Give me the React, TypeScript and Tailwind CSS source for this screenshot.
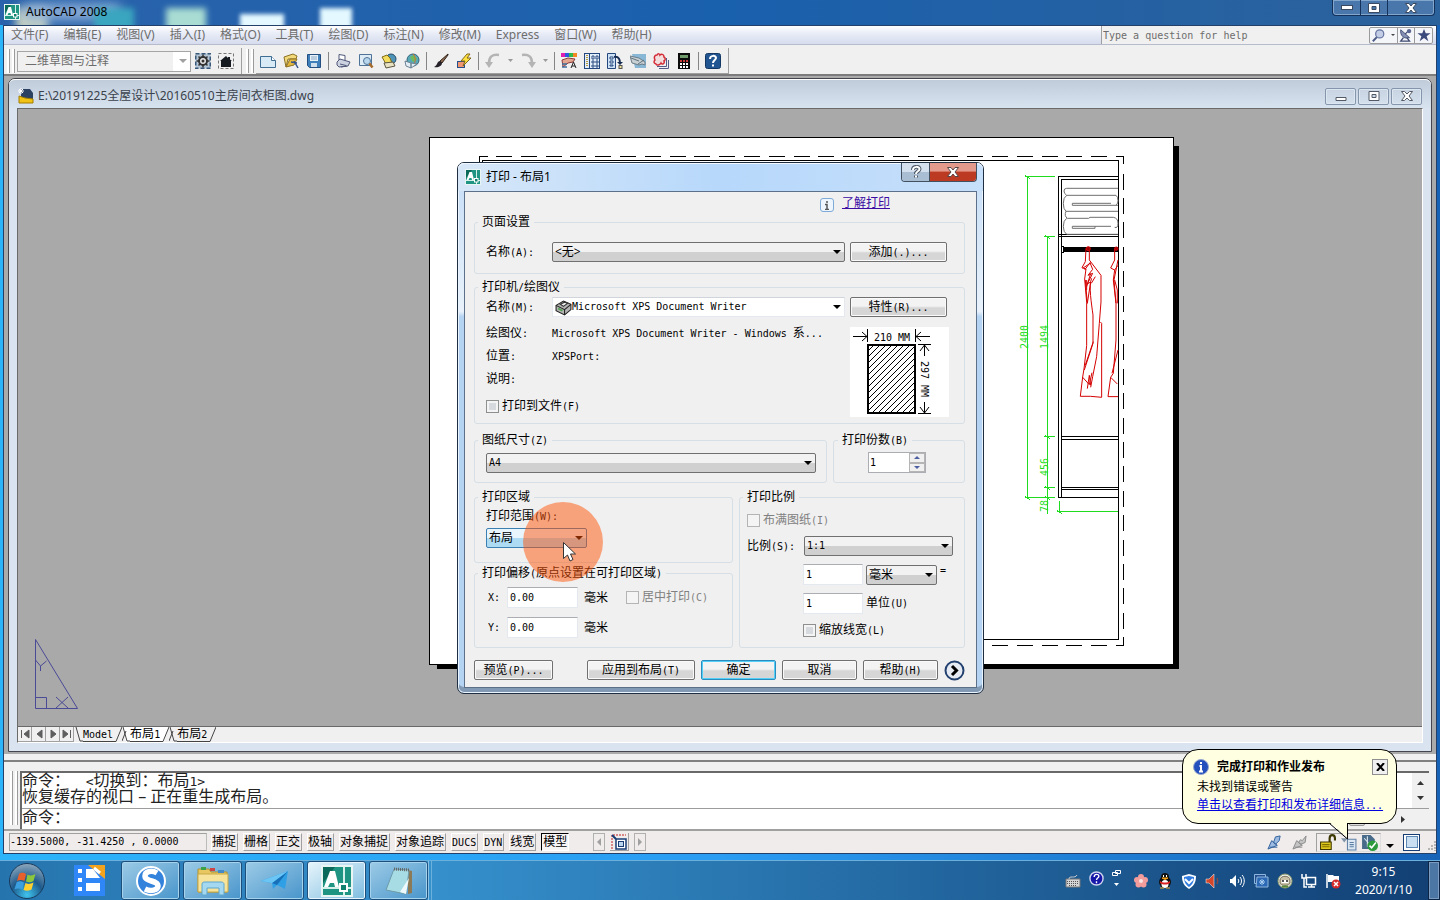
import type { ReactNode } from "react";

const sideTabs = ["捕捉", "栅格", "正交", "极轴", "对象捕捉", "对象追踪", "DUCS", "DYN", "线宽"];
const menus = [
  "文件(F)", "编辑(E)", "视图(V)", "插入(I)", "格式(O)", "工具(T)",
  "绘图(D)", "标注(N)", "修改(M)", "Express", "窗口(W)", "帮助(H)",
];

/* Latin runs are set in a half-width mono face, so two of them fill one hanzi cell */
function Mixed({ children, mono = "text-[10px]" }: { children: string; mono?: string }) {
  const parts = children.split(/([\x20-\x7e]+)/).filter(Boolean);
  return (
    <>
      {parts.map((part, i) => (
        <span
          key={i}
          className={
            /^[\x20-\x7e]/.test(part)
              ? `whitespace-pre font-['DejaVu_Sans_Mono',monospace] ${mono}`
              : "whitespace-pre"
          }
        >
          {part}
        </span>
      ))}
    </>
  );
}

function Icon({ children, size = 16 }: { children: ReactNode; size?: number }) {
  return (
    <svg width={size} height={size} viewBox="0 0 16 16" className="shrink-0" aria-hidden="true">
      {children}
    </svg>
  );
}

function CadLogo({ size = 16 }: { size?: number }) {
  return (
    <Icon size={size}>
      <rect width="16" height="16" fill="#e8f5f2" />
      <rect x="1" y="1" width="14" height="14" fill="#1f9483" />
      <path d="M1 1h6L1 9z" fill="#0c6a5c" />
      <path d="M1.500 11L4.500 3h2.500l2 8H7l-.5-2H4.500L3.500 11z" fill="#fff" />
      <path d="M11.500 1v8M11.500 13V15M1 11.500h8M13 11.500h2" stroke="#d5f0ea" />
      <rect x="9.500" y="9.500" width="3.500" height="3.500" fill="#12806f" stroke="#fff" />
    </Icon>
  );
}

function Caret({ className = "text-black" }: { className?: string }) {
  return (
    <svg width="8" height="4" viewBox="0 0 8 4" className={`pointer-events-none shrink-0 ${className}`} aria-hidden="true">
      <path d="M0 0h8L4 4z" fill="currentColor" />
    </svg>
  );
}

function Dropdown({ id, value, mono, className, look }: { id: string; value: string; mono?: boolean; className: string; look?: string }) {
  return (
    <div className={`relative flex h-5 items-center ${className}`}>
      <select
        id={id}
        className={`h-5 w-full appearance-none rounded-[2px] border pr-4 pl-0.5 text-black outline-none ${
          mono ? "font-['DejaVu_Sans_Mono',monospace] text-[10px]" : "text-xs"
        } ${look ?? "border-[#707070] bg-linear-to-b from-[#f2f2f2] from-50% to-[#d0d0d0] to-50%"}`}
      >
        <option>{value}</option>
      </select>
      <Caret className="absolute right-1 text-black" />
    </div>
  );
}

function PushButton({ children, className, primary }: { children: string; className: string; primary?: boolean }) {
  return (
    <button
      className={`h-5 rounded-[2px] border bg-linear-to-b from-[#f3f3f3] from-45% to-[#d6d6d6] to-55% text-center leading-4 whitespace-nowrap ${
        primary ? "border-[#2a8dbd] shadow-[inset_0_0_0_1px_#54d0f8]" : "border-[#707070] shadow-[inset_0_0_0_1px_#fafafa]"
      } ${className}`}
    >
      <Mixed>{children}</Mixed>
    </button>
  );
}

function Tick({ id, label, disabled }: { id: string; label: string; disabled?: boolean }) {
  return (
    <div className="flex h-4 items-center gap-[3px]">
      <input
        id={id}
        type="checkbox"
        disabled={disabled}
        className={`size-[13px] shrink-0 appearance-none border shadow-[inset_0_0_0_2px_#f4f4f4] ${
          disabled ? "border-[#b4b4b4] bg-[#f4f4f4]" : "border-[#8e8f8f] bg-[#d6dadf]"
        }`}
      />
      <label htmlFor={id} className={disabled ? "text-[#808080]" : ""}>
        <Mixed>{label}</Mixed>
      </label>
    </div>
  );
}

function Group({ title, className, children }: { title: string; className: string; children: ReactNode }) {
  return (
    <fieldset className={`min-w-0 rounded-[3px] border border-[#d5dfe5] ${className}`}>
      <legend className="-ml-2 h-4 px-1 leading-4">
        <Mixed>{title}</Mixed>
      </legend>
      {children}
    </fieldset>
  );
}

const field =
  "h-[21px] border border-[#e3e9ef] border-t-[#abadb3] bg-white pl-0.5 font-['DejaVu_Sans_Mono',monospace] text-[10px] text-black outline-none";

function ToolButton({ label, children }: { label: string; children: ReactNode }) {
  return (
    <button aria-label={label} className="flex h-6 w-[23px] shrink-0 items-center justify-center">
      <Icon>{children}</Icon>
    </button>
  );
}

function Sep() {
  return (
    <div className="flex w-1.5 shrink-0 justify-center">
      <div className="h-[18px] w-px bg-[#868686]" />
    </div>
  );
}

function Grip({ className }: { className: string }) {
  return (
    <div className={`flex shrink-0 gap-0.5 ${className}`}>
      <div className="w-[3px] border-r border-[#9b9b9b] bg-white" />
      <div className="w-[3px] border-r border-[#9b9b9b] bg-white" />
    </div>
  );
}

function TitleBar() {
  return (
    <header className="relative flex h-[25px] shrink-0 items-center justify-between overflow-hidden bg-linear-to-r from-[#2a63ab] via-[#1960ad] via-50% to-[#2c629b]">
      <div className="absolute top-2 left-4 h-6 w-8 bg-[#c8d3c0] blur-[4px]" />
      <div className="absolute top-1 left-[24px] h-4 w-24 bg-[#8fb0d8] blur-[6px]" />
      <div className="absolute top-2 left-[94px] h-6 w-10 bg-[#3aa6bf] blur-[3px]" />
      <div className="absolute top-2 left-[166px] h-6 w-10 bg-[#a9dcd2] blur-[3px]" />
      <div className="absolute top-3.5 left-[240px] h-5 w-11 bg-[#e3f8ff] blur-[2px]" />
      <div className="absolute top-2 left-[320px] h-6 w-8 bg-[#e3f8ff] blur-[2px]" />
      <div className="relative flex items-center gap-1.5 pb-0.5 pl-1">
        <CadLogo />
        <h1 className="text-xs text-black">AutoCAD 2008</h1>
      </div>
      <div className="relative mr-[5px] flex h-4 self-start rounded-b border border-t-0 border-[#14315c] bg-[#4a77ab] shadow-[inset_0_0_0_1px_#83a6cd]">
        <button aria-label="最小化" className="flex w-7 items-center justify-center border-r border-[#14315c]">
          <svg width="12" height="5"><rect x=".5" y=".5" width="11" height="4" fill="#fff" stroke="#3b4a60" /></svg>
        </button>
        <button aria-label="最大化" className="flex w-[27px] items-center justify-center border-r border-[#14315c]">
          <svg width="12" height="10"><path d="M.5.5h11v9H.5zM4 3.500h4v3H4z" fill="#fff" fillRule="evenodd" stroke="#3b4a60" /></svg>
        </button>
        <button aria-label="关闭" className="flex w-[46px] items-center justify-center">
          <svg width="12" height="10" viewBox="0 0 12 10"><path d="M.5.500h3.500l2 2.500 2-2.500h3.500L8 5l3.500 4.500H8L6 7 4 9.500H.500L4 5z" fill="#fff" stroke="#3b4a60" /></svg>
        </button>
      </div>
    </header>
  );
}

function MenuBar() {
  return (
    <nav className="flex h-[19px] shrink-0 items-center border-b border-[#b6bccc] bg-linear-to-b from-white via-[#e9edf7] via-40% to-[#d6dcee] pl-[7px]">
      <div className="flex flex-1 gap-[15px] text-xs leading-5 whitespace-nowrap text-[#6d6d6d]">
        {menus.map((m) => (
          <button key={m}>{m}</button>
        ))}
      </div>
      <input
        aria-label="Type a question for help"
        placeholder="Type a question for help"
        className="h-[18px] w-[268px] border-l border-[#a0a0a0] bg-[#f0f0f0] pl-px font-['DejaVu_Sans_Mono',monospace] text-[10px] outline-none placeholder:text-[#6d6d6d]"
      />
      <div className="mr-[3px] flex h-[17px] items-center rounded-[2px] border border-[#9a9a9a] bg-[#f4f5f9]">
        <button aria-label="搜索" className="flex h-full w-7 items-center justify-between border-r border-[#9a9a9a] px-0.5">
          <Icon size={13}>
            <path d="M1 15l5-5" stroke="#4c5a86" strokeWidth="2.500" />
            <circle cx="9.500" cy="6" r="5" fill="#c4cde6" stroke="#6573a0" strokeWidth="1.500" />
          </Icon>
          <svg width="4" height="2"><path d="M0 0h4L2 2z" fill="#444" /></svg>
        </button>
        <button aria-label="通讯中心" className="flex h-full w-[17px] items-center justify-center border-r border-[#9a9a9a]">
          <Icon size={14}>
            <path d="M2 2c-1 7 4 11 10 9z" fill="#8490b4" stroke="#3e4a70" />
            <path d="M7 7l4-4M5 11l-3 4h10l-3-4" stroke="#3e4a70" strokeWidth="1.500" fill="none" />
            <circle cx="11.500" cy="3.500" r="2.500" fill="#5b6892" />
          </Icon>
        </button>
        <button aria-label="收藏夹" className="flex h-full w-[17px] items-center justify-center">
          <Icon size={14}>
            <path d="M8 1l2 5h5.500l-4.500 3.500L13 15l-5-3.500L3 15l2-5.500L.500 6H6z" fill="#3b4a7c" />
          </Icon>
        </button>
      </div>
    </nav>
  );
}

function ToolBar() {
  return (
    <div className="flex h-[29px] shrink-0 items-center bg-[#f0f0f0] pt-[3px]">
      <Grip className="ml-[3px] h-6" />
      <div className="relative ml-0.5 flex h-[21px] w-[174px] shrink-0 items-center border border-[#a5a5a5] bg-white">
        <select aria-label="工作空间" disabled className="h-full w-full appearance-none bg-linear-to-r from-[#f0f0f0] from-90% to-white to-90% pl-[7px] text-xs text-[#6d6d6d]">
          <option>二维草图与注释</option>
        </select>
        <Caret className="absolute right-[3px] text-[#a0a0a0]" />
      </div>
      <ToolButton label="工作空间设置">
        <rect x=".5" y=".5" width="15" height="15" fill="#b5c6d6" stroke="#39597a" strokeWidth="2" strokeDasharray="4 2" />
        <circle cx="8" cy="8" r="4" fill="#e6e6e6" stroke="#333" strokeWidth="2" />
        <path d="M8 1.500v3M8 11.500v3M1.500 8h3M11.500 8h3M3.500 3.500l2 2M10.500 10.500l2 2M12.500 3.500l-2 2M5.500 10.500l-2 2" stroke="#333" strokeWidth="1.500" />
        <circle cx="8" cy="8" r="1.500" fill="#333" />
      </ToolButton>
      <ToolButton label="我的工作空间">
        <rect x=".5" y=".5" width="15" height="15" fill="none" stroke="#777" strokeDasharray="3 2" />
        <path d="M8 3L2 8h1v6h10V8h1l-2-1.500V4h-2v1z" fill="#171b22" />
      </ToolButton>
      <div className="ml-1 h-[27px] w-px shrink-0 bg-[#a0a0a0]" />
      <Grip className="mr-0.5 ml-1 h-6" />
      <div className="flex h-full items-center border-r border-b border-[#a0a0a0] pr-1">
        <ToolButton label="新建">
          <path d="M.500 3.500h11l4 4v7H.500z" fill="#d7eaf5" stroke="#3f6d93" />
          <path d="M11.500 3.500v4h4" fill="#fff" stroke="#3f6d93" />
        </ToolButton>
        <ToolButton label="打开">
          <path d="M1 4l9-3 4 2-1 3H5L3 14z" fill="#f2d97a" stroke="#8c7226" />
          <path d="M3 14l4-8h7l-3 6z" fill="#e4b93e" stroke="#8c7226" />
          <path d="M8 9l6 1M11 8l4 7" stroke="#35528c" strokeWidth="1.500" />
        </ToolButton>
        <ToolButton label="保存">
          <path d="M1.500 1.500h13v13h-11l-2-2z" fill="#3f7fba" stroke="#244f80" />
          <rect x="4" y="2" width="8" height="6" fill="#e8f1f8" />
          <path d="M5 4h6M5 6h6" stroke="#8aa9c4" />
          <rect x="5" y="10" width="6" height="4" fill="#cfdfec" />
        </ToolButton>
        <Sep />
        <ToolButton label="打印">
          <path d="M4 8V1.500l6 1V8" fill="#fff" stroke="#50597a" />
          <path d="M2 9l3-3 10 3-2 4-9 1-2-2z" fill="#ccd2e0" stroke="#50597a" />
          <path d="M5 11l6 1.500M6 14l6-1" stroke="#50597a" />
        </ToolButton>
        <ToolButton label="打印预览">
          <path d="M1.500 1.500h12v11h-12z" fill="#dcebf6" stroke="#4f7396" />
          <circle cx="9" cy="8" r="3.500" fill="#b5d6ec" stroke="#4f7396" />
          <path d="M11.500 10.500l3 4" stroke="#a66a2c" strokeWidth="2.500" />
        </ToolButton>
        <ToolButton label="发布">
          <circle cx="10" cy="6" r="5" fill="#4f93b8" stroke="#254d6b" />
          <path d="M1 4l5-2 3 3 2 5-6 1z" fill="#f4dc5c" stroke="#7f6b16" />
          <path d="M3 10l9-1 2 4-9 2z" fill="#e9e1c4" stroke="#59553f" />
        </ToolButton>
        <ToolButton label="三维 DWF">
          <circle cx="9" cy="7" r="6" fill="#58a9b6" stroke="#33647d" />
          <path d="M6 4l4-2 3 4-4 3z" fill="#6dbb5c" /><path d="M9 1c3 3 3 8 0 12" stroke="#d1702f" fill="none" />
          <path d="M1 8l6 2v5l-5-2zM7 10l6 1-6 4z" fill="#e4edf3" stroke="#6c8496" />
        </ToolButton>
        <Sep />
        <ToolButton label="特性匹配">
          <path d="M15 1L7 8l2 2 6-8z" fill="#8d6a50" stroke="#33241b" />
          <path d="M7 8c-3 0-2 4-6 6 4 1 8-1 8-4z" fill="#27222a" />
        </ToolButton>
        <ToolButton label="块编辑器">
          <rect x="1.500" y="8.500" width="7" height="6" fill="#f19673" stroke="#274f8a" />
          <path d="M11 1L5 8h4l-2 5 8-8h-4l3-4z" fill="#ffe23f" stroke="#82671a" />
        </ToolButton>
        <Sep />
        <ToolButton label="放弃">
          <path d="M14 2C7 1 4 4 4 10" fill="none" stroke="#b4b4b4" strokeWidth="2.500" />
          <path d="M0 9h8l-4 6z" fill="#b4b4b4" />
        </ToolButton>
        <div className="flex w-3 justify-center"><svg width="5" height="3"><path d="M0 0h5L2.500 3z" fill="#999" /></svg></div>
        <ToolButton label="重做">
          <path d="M2 2c7-1 10 2 10 8" fill="none" stroke="#b4b4b4" strokeWidth="2.500" />
          <path d="M8 9h8l-4 6z" fill="#b4b4b4" />
        </ToolButton>
        <div className="flex w-3 justify-center"><svg width="5" height="3"><path d="M0 0h5L2.500 3z" fill="#999" /></svg></div>
        <Sep />
        <ToolButton label="特性">
          <path d="M0 0h4v4H0z" fill="#e01fb0" /><path d="M4 0h4v4H4z" fill="#2c55e0" />
          <path d="M8 0h4v4H8z" fill="#2fb94a" /><path d="M12 0h4v4h-4z" fill="#f08a20" />
          <path d="M1 7l6-2 7 1-2 3-5 1-5 4z" fill="#e3a58f" stroke="#8a3b3b" />
          <path d="M1 11h5M1 14h5" stroke="#3f6da0" strokeWidth="1.500" />
          <path d="M10 15l2.500-6 2.500 6M11 13h3" fill="none" stroke="#222" />
        </ToolButton>
        <ToolButton label="设计中心">
          <rect x=".5" y=".5" width="15" height="15" fill="#e4eefa" stroke="#24487e" />
          <path d="M5.500 1v14" stroke="#24487e" /><path d="M3 2v12" stroke="#b69c3a" strokeDasharray="1 1" strokeWidth="2" />
          <path d="M8 3h2v3H8zM12 3h2v3h-2zM8 8h2v2H8zM12 8h2v2h-2zM8 12h2v2H8zM12 12h2v2h-2z" fill="#fff" stroke="#24487e" />
        </ToolButton>
        <ToolButton label="工具选项板">
          <path d="M.500.500h8v15h-8z" fill="#cfe2f5" stroke="#24487e" />
          <path d="M3 4h3v2H3zM3 8h3v2H3zM3 12h3v1H3z" fill="#fff" stroke="#24487e" />
          <path d="M7 4c5-1 6 3 6 6" fill="none" stroke="#182c52" strokeWidth="2" />
          <path d="M10 9h6l-3 3z" fill="#182c52" /><rect x="12" y="12.500" width="3" height="3" fill="#f2e394" stroke="#555" />
        </ToolButton>
        <ToolButton label="图纸集管理器">
          <path d="M2 1h14v14H5z" fill="#88b8d6" /><path d="M0 3l9 2 6 4v3l-3-1-3 1-7-2z" fill="#c9d0d4" stroke="#6b7d88" />
          <path d="M1 5l8 3M8 11l6-4" stroke="#5f747f" />
        </ToolButton>
        <ToolButton label="标记集管理器">
          <path d="M4 13.500h9.500V5M6 15.500h9.500V7" fill="none" stroke="#555a86" />
          <path d="M2 11V2h9v9z" fill="#f3dede" />
          <path d="M3 11c-3-1-2-3-1-4-1-2-1-5 2-5 1-2 3-1 3 0 2-2 4 0 4 2 2 1 1 4 0 4 1 3-2 4-3 2-1 2-4 3-5 1z" fill="none" stroke="#d42a35" strokeWidth="1.500" />
        </ToolButton>
        <ToolButton label="快速计算器">
          <rect x="2" width="12" height="16" fill="#0b0b0b" /><rect x="4" y="2" width="8" height="3" fill="#6f9a6a" />
          <path d="M4 8h8M4 11h8M4 14h8" stroke="#fff" strokeWidth="2" strokeDasharray="2 1" />
          <path d="M4 8h8" stroke="#c93a3a" strokeWidth="2" strokeDasharray="2 1" />
        </ToolButton>
        <Sep />
        <ToolButton label="帮助">
          <rect x=".5" y=".5" width="15" height="15" rx="2" fill="#205591" stroke="#143863" />
          <path d="M5 6c0-4 6-4 6-1 0 2-3 2-3 5M8 11.500v2" fill="none" stroke="#fff" strokeWidth="2" />
        </ToolButton>
      </div>
    </div>
  );
}

function PaperSpace() {
  return (
    <svg width="1404" height="617" viewBox="18 109 1404 617" className="block" shapeRendering="crispEdges" fill="none">
      <rect x="437" y="146" width="742" height="523" fill="#000" />
      <rect x="429.500" y="137.500" width="744" height="527" fill="#fff" stroke="#000" />
      <path d="M479.500 164v-7.500h8M1116 156.500h7.500v7" stroke="#000" />
      <path d="M496 156.500h620M992 645.500h132" stroke="#000" strokeDasharray="16 8.800" />
      <path d="M1123.500 173.600V645" stroke="#000" strokeDasharray="16 8.400" />
      <path d="M482.500 160.500h636v479h-636z" stroke="#000" />

      {/* wardrobe */}
      <path
        d="M1118 176.500h-59.500v321h59.500M1118 179.500h-56.500v318M1058.500 234.500h60M1058.500 236.500h60M1061.500 436.500h57M1061.500 439.500h57M1061.500 487.500h57M1061.500 489.500h57"
        stroke="#000"
      />
      <path d="M1062 247h56v5h-56z" fill="#000" />
      <path d="M1061.500 246.500h2v6h-2z" fill="#fff" stroke="#000" />

      {/* folded blankets */}
      <g transform="translate(990 120) scale(0.3333)" stroke="#6e6e6e" strokeWidth="3" shapeRendering="auto">
        <path d="M384 205H230q-8 0-8 8t8 13h148q6 4 6 16t-6 12M230 226q-10 6-10 24t8 24h156M228 274q-6 14 4 21h64l4-3h70q14 2 14 18t-10 12M230 295q-10 6-10 24t10 24h154" />
        <path d="M384 256H247v-6h116M363 319h-48v6h-68v-6h68" />
      </g>

      {/* clothes on the rail */}
      <g transform="translate(990 120) scale(0.3333)" stroke="#d40000" strokeWidth="3" shapeRendering="auto">
        <path d="M288 385l-2 40-10 18 12 4-4 30 6 70v130l-8 70-4 24-7 58 30 0 34 3V610l-4-4M298 385v35l35 46v80l-5 64-8 100-12 60-6 32" />
        <path d="M284 450l16-22 8 20-14 18 14-6-16 32 10-6-10 64M286 480l6 70M290 500l12-40M305 475c-10 20 0 80 4 110v85l-26 80M316 470l-12 20M310 665l-24 70M278 772l20 22 8-36M292 806l6-40 4 30M290 480v30M278 445l24-16" />
        <path d="M374 385v35l-12 24 12 6-4 30 8 70v110l-8 100-8 12-8 58h30M384 420l-12 60 6 70M374 450l10-14M384 690l-18 70M362 772l20 20M374 480l8 30v40" />
        <circle cx="295" cy="386" r="6" fill="#900" />
        <circle cx="379" cy="386" r="5" fill="#900" />
      </g>

      {/* dimensions */}
      <g stroke="#1fdc1f">
        <path d="M1055 176.500h-30M1027.500 176v322M1025 497.500h30M1047.500 236v278M1044 236.500h11M1044 436.500h11M1044 487.500h11M1059.500 501v12M1057 511.500h61" />
        <path d="M1025 175l5 4M1025 496l5 4M1045 235l5 4M1045 435l5 4M1045 486l5 4M1045 496l5 4M1057 510l5 4" />
      </g>
      <g fill="#1fdc1f" fontFamily="DejaVu Sans Mono, monospace" fontSize="10" textAnchor="middle">
        <text transform="translate(1028 337) rotate(-90)">2400</text>
        <text transform="translate(1048 337) rotate(-90)">1494</text>
        <text transform="translate(1048 467) rotate(-90)">456</text>
        <text transform="translate(1048 506) rotate(-90)">78</text>
      </g>

      {/* UCS triangle */}
      <path
        d="M35.500 639.500v69h42zM35.500 697.500h11v11M35.500 660l5 6 6-5M40.500 666v5M56 697l12 11M68 697l-12 11"
        stroke="#4a4a96"
        shapeRendering="auto"
      />
    </svg>
  );
}

function DocumentWindow() {
  return (
    <main className="flex min-h-0 flex-1 flex-col border-t-2 border-[#7c7c7c] bg-[#ababab] px-1 pt-0.5 pb-0.5">
      <div className="flex min-h-0 flex-1 flex-col rounded-t-[7px] border border-[#45454d] bg-[#d9e4f0] px-2 pb-2">
        <div className="-mx-2 flex h-[29px] shrink-0 items-center justify-between rounded-t-md border-t border-white bg-linear-to-b from-[#c0ccda] to-[#d8e3f0] px-2">
          <div className="flex items-center gap-1 pt-1 pl-px">
            <Icon>
              <path d="M3 1h9l3 4v9H3z" fill="#2c4263" />
              <path d="M3 0v6M0 3h6M1 1l4 4M5 1L1 5" stroke="#fff" />
              <path d="M1 8l6 2 8 1v4H1z" fill="#f2c317" stroke="#a37e00" />
            </Icon>
            <h2 className="text-xs text-[#3a424c]">E:\20191225全屋设计\20160510主房间衣柜图.dwg</h2>
          </div>
          <div className="flex gap-0.5 pt-1 pr-px">
            {["M2 9.500h10v3H2z", "M2 3.500h10v9H2zM5 6.500h4v3H5z", "M1.500 3.500h3L7 6l2.500-2.500h3L9 8l3.500 4.500h-3L7 10l-2.500 2.500h-3L5 8z"].map((d, i) => (
              <button
                key={d}
                aria-label={["最小化文档", "还原文档", "关闭文档"][i]}
                className="flex h-[17px] w-[31px] items-center justify-center rounded-[2px] border border-[#8595ab] shadow-[inset_0_0_0_1px_#dce6f1]"
              >
                <svg width="14" height="16"><path d={d} fill="#fff" fillRule="evenodd" stroke="#535a66" /></svg>
              </button>
            ))}
          </div>
        </div>
        <div className="flex min-h-0 flex-1 flex-col border border-[#6a6a6a] border-r-white border-b-white bg-[#a9a9a9]">
          <div className="min-h-0 flex-1 overflow-hidden">
            <PaperSpace />
          </div>
          <div className="flex h-4 shrink-0 border-t border-[#696969] bg-[#f0f0f0] text-xs leading-[15px]">
            {["M1.500 3v8M9 3L4 7l5 4z", "M8 3L3 7l5 4z", "M3 3l5 4-5 4z", "M8.500 3v8M1 3l5 4-5 4z"].map((d) => (
              <button key={d} aria-label="滚动布局选项卡" className="flex w-3.5 items-center justify-center border-r border-b border-[#a0a0a0]">
                <svg width="10" height="14"><path d={d} fill="#5e5e5e" stroke="#5e5e5e" /></svg>
              </button>
            ))}
            <div className="flex pl-px" role="tablist">
              {["Model", "布局1", "布局2"].map((name, i) => (
                <div key={name} className="flex">
                  <svg width="8" height="15">
                    <path d={i === 1 ? "M0 0h8v15H4z" : "M0 0"} fill="#fff" />
                    <path d="M1 0l4 14h3" fill="none" stroke="#444" />
                    {i > 0 && <path d="M0 14L4 4" stroke="#444" />}
                  </svg>
                  <button role="tab" className={`border-b border-[#444] leading-[14px] ${i === 1 ? "bg-white" : ""}`}>
                    <Mixed>{name}</Mixed>
                  </button>
                  <svg width="9" height="15">
                    <path d={i === 1 ? "M0 0h9L4 15H0z" : "M0 0"} fill="#fff" />
                    <path d="M0 14.500h3L9 0" fill="none" stroke="#444" />
                  </svg>
                </div>
              ))}
            </div>
          </div>
        </div>
      </div>
    </main>
  );
}

function CommandPane() {
  return (
    <section className="mt-1.5 flex shrink-0 gap-0.5 border-t-2 border-[#808080] bg-[#f0f0f0] pt-[9px] pr-[7px] pl-1.5">
      <Grip className="h-[54px]" />
      <div className="min-w-0 flex-1 border-t-2 border-l-2 border-[#696969] bg-white text-base text-[#222]">
        <div className="flex h-9 border-b border-[#9c9c9c]">
          <div className="flex-1 leading-4 whitespace-pre">
            <p className="-mt-px h-4">命令：<Mixed mono="text-[13px]">{"  <"}</Mixed>切换到：布局<Mixed mono="text-[13px]">{"1>"}</Mixed></p>
            <p className="h-4">恢复缓存的视口 – 正在重生成布局。</p>
          </div>
          <div className="flex w-[17px] flex-col items-center justify-between bg-[#f0f0f0] py-2">
            <svg width="7" height="4"><path d="M0 4h7L3.500 0z" fill="#333" /></svg>
            <svg width="7" height="4"><path d="M0 0h7L3.500 4z" fill="#333" /></svg>
          </div>
        </div>
        <div className="flex h-5 items-center">
          <label htmlFor="command" className="-mt-1 leading-4">命令：</label>
          <input id="command" className="h-4 min-w-0 flex-1 outline-none" />
          <div className="flex h-full w-16 items-center justify-between bg-[#f0f0f0] px-1">
            <div className="h-3.5 w-4 rounded-[2px] border border-[#999] bg-[#dcdcdc]" />
            <svg width="4" height="7"><path d="M0 0v7l4-3.500z" fill="#333" /></svg>
          </div>
          <div className="h-full w-5 bg-[#f0f0f0]" />
        </div>
      </div>
    </section>
  );
}

function StatusBar() {
  return (
    <footer className="flex h-6 shrink-0 items-center border-t-2 border-[#a0a0a0] bg-[#f0ecec] text-xs leading-4">
      <output className="ml-[5px] flex h-[18px] w-[198px] shrink-0 items-center border border-[#a0a0a0] border-r-[#bbb]">
        <Mixed>-139.5000, -31.4250 , 0.0000</Mixed>
      </output>
      <div className="ml-1 flex gap-[5px] whitespace-nowrap">
        {sideTabs.map((t) => (
          <button key={t} className="h-[18px] border-t border-r border-b border-l border-[#a0a0a0] border-t-white border-l-white pr-px">
            <Mixed>{t}</Mixed>
          </button>
        ))}
        <button className="h-[18px] border-t border-r border-b border-l border-white border-t-black border-l-black bg-[#f7f4f4] px-px">模型</button>
      </div>
      <div className="ml-6 flex items-center gap-[5px]">
        <button aria-label="上一布局" className="flex h-[18px] w-3 items-center justify-center border border-[#b0b0b0]">
          <svg width="4" height="8"><path d="M4 0v8L0 4z" fill="#a0a0a0" /></svg>
        </button>
        <button aria-label="最大化视口" className="flex h-[18px] w-[19px] items-center justify-center border-r border-b border-[#a0a0a0]">
          <Icon>
            <path d="M1 15V1h14" fill="none" stroke="#c02020" strokeDasharray="2 1" />
            <path d="M1 1l4 4" stroke="#173c74" strokeWidth="2" />
            <rect x="5" y="5" width="10" height="10" fill="#fff" stroke="#173c74" strokeWidth="1.500" />
            <rect x="7.500" y="7.500" width="5" height="5" fill="#bcd4ec" stroke="#173c74" />
          </Icon>
        </button>
        <button aria-label="下一布局" className="flex h-[18px] w-3 items-center justify-center border border-[#b0b0b0]">
          <svg width="4" height="8"><path d="M0 0v8l4-4z" fill="#a0a0a0" /></svg>
        </button>
      </div>
      <div className="ml-auto flex items-center">
        <div className="flex gap-2.5 pr-[9px]">
          <Icon size={15}>
            <path d="M1 15L5 6l6 5zM3 13h8M7 8l2-6 5-1-1 5-4 4z" fill="#9dbbe0" stroke="#2e5f9c" />
          </Icon>
          <Icon size={15}>
            <path d="M1 15L5 6l6 5zM3 13h8M7 8l2-3 2 1 4-5-1 7-5 2z" fill="#c4c4c4" stroke="#8a8a8a" />
          </Icon>
        </div>
        <div className="flex h-[19px] items-center gap-1 border border-[#a0a0a0] border-r-[#ddd] border-b-[#ddd] pr-0.5 pl-0.5">
          <Icon size={17}>
            <path d="M10 8V4c0-4 5-4 5 0v2" fill="none" stroke="#3c3600" strokeWidth="2" />
            <path d="M1.500 7.500h10v7h-10z" fill="#e0c81e" stroke="#3c3600" />
            <path d="M3 10h7M3 12h7" stroke="#7d6f00" />
          </Icon>
          <Icon size={17}>
            <path d="M7 5h8v10H7z" fill="#dbe8f4" stroke="#5e7fa4" /><path d="M9 8h4M9 10h4M9 12h4" stroke="#5e7fa4" />
            <path d="M1 4h6l-3 4z" fill="#7f93a8" />
          </Icon>
          <Icon size={17}>
            <path d="M1 1h8l4 4v9H1z" fill="#496b8a" /><path d="M3 4l7 8M6 2v10" stroke="#dfeaf3" />
            <circle cx="11" cy="11" r="5" fill="#2d9a3c" /><path d="M8 11l2 2 4-5" fill="none" stroke="#fff" strokeWidth="1.500" />
          </Icon>
        </div>
        <Caret className="mx-[5px] mt-2 text-black" />
        <div className="mr-2 ml-1 flex size-[17px] items-center justify-center border border-[#173c74] bg-white">
          <div className="size-3 border border-[#5c86b4] bg-[#c9def0]" />
        </div>
        <svg width="8" height="10" className="mt-2"><path d="M7 0v10M4 4v6M1 7v3" stroke="#b4b4b4" strokeWidth="2" strokeDasharray="2 1" /></svg>
      </div>
    </footer>
  );
}

function PaperPreview() {
  return (
    <svg width="99" height="90" viewBox="0 0 99 90" className="block bg-white" stroke="#000" fill="none">
      <defs>
        <pattern id="hatch" width="6" height="6" patternUnits="userSpaceOnUse">
          <path d="M-1 7L7-1M-1 1l2-2M5 7l2-2" stroke="#000" />
        </pattern>
      </defs>
      <rect x="18" y="18" width="47" height="68" fill="url(#hatch)" strokeWidth="2" />
      <path d="M17.500 2v13M65.500 2v13M3 9.500h14M12 5l5 4.500-5 4.500M80 9.500H66M71 5l-5 4.500 5 4.500M68 17.500h13M68 86.500h13M74.500 18v11M70 24l4.500-6 4.500 6M74.500 75v11M70 80l4.500 6 4.500-6" />
      <g fill="#000" stroke="none" fontFamily="DejaVu Sans Mono, monospace" fontSize="10" textAnchor="middle">
        <text x="42" y="14">210 MM</text>
        <text transform="translate(71 52) rotate(90)">297 MM</text>
      </g>
    </svg>
  );
}

function PlotDialog() {
  return (
    <section
      role="dialog"
      aria-label="打印 - 布局1"
      className="absolute top-[162px] left-[457px] w-[527px] rounded-[7px] border border-[#1f2e40] bg-linear-to-b from-[#c4dcf6] via-[#e9f2fb] via-28% to-[#b5d3f2] to-29% px-1.5 pb-[5px] text-xs leading-4 text-black shadow-[inset_0_0_0_1px_#e9f4ff,inset_0_-6px_0_#829ab4]"
    >
      <div className="-mx-1.5 flex h-7 items-start justify-between rounded-t-md bg-linear-to-r from-[#d7e7f8] via-[#b7d8fb] via-50% to-[#c6dffa] pr-1.5 pl-[7px] shadow-[inset_0_1px_0_#f2f8ff]">
        <div className="flex items-center gap-[5px] pt-1.5">
          <CadLogo />
          <h2>打印 - 布局1</h2>
        </div>
        <div className="flex h-[19px] overflow-hidden rounded-b-[4px] border border-t-0 border-[#43505f]">
          <button aria-label="帮助" className="flex w-7 items-center justify-center border-r border-[#43505f] bg-linear-to-b from-[#d4e0ed] from-50% to-[#a9bdd3] to-50%">
            <svg width="12" height="14" viewBox="0 0 12 14" fill="none">
              <path d="M3 5c0-4 6.500-4 6.500-1 0 2.500-3.500 2-3.500 5M6 10.500v2" stroke="#4e5866" strokeWidth="4" />
              <path d="M3 5c0-4 6.500-4 6.500-1 0 2.500-3.500 2-3.500 5M6 10.500v2" stroke="#fff" strokeWidth="2" />
            </svg>
          </button>
          <button aria-label="关闭" className="flex w-[46px] items-center justify-center bg-linear-to-b from-[#e39a8c] from-45% to-[#bd3a22] to-50%">
            <svg width="12" height="10" viewBox="0 0 12 10"><path d="M.5.500h3.500l2 2.500 2-2.500h3.500L8 5l3.500 4.500H8L6 7 4 9.500H.500L4 5z" fill="#fff" stroke="#5a4545" /></svg>
          </button>
        </div>
      </div>

      <form className="border border-[#5c7089] bg-[#f0f0f0] pr-[11px] pb-[7px] pl-[9px]" onSubmit={(e) => e.preventDefault()}>
        <div className="flex h-[22px] items-start justify-end gap-2 pr-[75px]">
          <span className="mt-1.5 flex size-[14px] items-center justify-center rounded-[3px] border border-[#7fa9d6] bg-[#eef5fc]">
            <svg width="6" height="9"><path d="M3 0v2M1 3.500h2v5M1 8.500h4" fill="none" stroke="#555" strokeWidth="1.500" /></svg>
          </span>
          <a href="#learn" className="pt-[3px] text-[#3a0ca3] underline">了解打印</a>
        </div>

        <Group title="页面设置" className="pt-3 pr-[17px] pb-[11px] pl-[11px]">
          <div className="flex items-center">
            <label htmlFor="page-name" className="w-[66px] shrink-0"><Mixed>名称(A):</Mixed></label>
            <Dropdown id="page-name" value="<无>" className="flex-1" />
            <PushButton className="ml-[5px] w-[97px]">添加(.)...</PushButton>
          </div>
        </Group>

        <Group title="打印机/绘图仪" className="mt-[5px] pt-0.5 pr-4 pb-1.5 pl-[11px]">
          <div className="flex gap-[5px]">
            <div className="min-w-0 flex-1">
              <div className="flex items-center">
                <label htmlFor="printer" className="w-[66px] shrink-0"><Mixed>名称(M):</Mixed></label>
                <div className="relative flex h-5 flex-1 items-center border border-[#e3e9ef] border-t-[#d0d5dc] bg-white pl-0.5">
                  <Icon size={17}>
                    <path d="M1 6l7-4 7 3v5l-6 5-8-4z" fill="#b4b4b4" stroke="#222" />
                    <path d="M1 6l8 4 6-5M9 10v5" fill="none" stroke="#222" />
                    <path d="M5 5l4-2 3 1-4 3z" fill="#eee" stroke="#333" />
                    <path d="M3 9l4 2" stroke="#4ea34e" strokeWidth="1.500" />
                  </Icon>
                  <select id="printer" className="h-full flex-1 appearance-none font-['DejaVu_Sans_Mono',monospace] text-[10px] outline-none">
                    <option>Microsoft XPS Document Writer</option>
                  </select>
                  <Caret className="absolute right-[3px] text-black" />
                </div>
              </div>
              <dl className="grid grid-cols-[66px_1fr] pt-[5px] leading-[22px] whitespace-nowrap">
                <dt><Mixed>绘图仪:</Mixed></dt>
                <dd><Mixed>Microsoft XPS Document Writer - Windows 系...</Mixed></dd>
                <dt><Mixed>位置:</Mixed></dt>
                <dd><Mixed>XPSPort:</Mixed></dd>
                <dt><Mixed>说明:</Mixed></dt>
                <dd />
              </dl>
              <div className="pt-[7px]">
                <Tick id="to-file" label="打印到文件(F)" />
              </div>
            </div>
            <div className="flex w-[98px] shrink-0 flex-col gap-2.5">
              <PushButton className="w-[97px]">特性(R)...</PushButton>
              <PaperPreview />
            </div>
          </div>
        </Group>

        <div className="mt-2 flex gap-1.5">
          <Group title="图纸尺寸(Z)" className="flex-1 pt-[5px] pr-2.5 pb-[9px] pl-[11px]">
            <Dropdown id="paper" value="A4" mono className="w-full" />
          </Group>
          <Group title="打印份数(B)" className="w-[132px] pt-1 pb-[9px] pl-3">
            <div className="ml-[22px] flex h-[21px] w-[58px] border border-[#abadb3] bg-white">
              <input aria-label="打印份数" defaultValue="1" className="w-10 pl-px font-['DejaVu_Sans_Mono',monospace] text-[10px] outline-none" />
              <div className="flex flex-1 flex-col">
                <button aria-label="增加" className="flex flex-1 items-center justify-center border border-[#b5b5b5] bg-[#f0f0f0]">
                  <svg width="6" height="3"><path d="M0 3h6L3 0z" fill="#4c5fa0" /></svg>
                </button>
                <button aria-label="减少" className="flex flex-1 items-center justify-center border border-[#b5b5b5] bg-[#f0f0f0]">
                  <svg width="6" height="3"><path d="M0 0h6L3 3z" fill="#4c5fa0" /></svg>
                </button>
              </div>
            </div>
          </Group>
        </div>

        <div className="mt-1.5 flex gap-1.5">
          <div className="flex flex-1 flex-col gap-0.5">
            <Group title="打印区域" className="pt-[3px] pb-[14px] pl-[11px]">
              <label htmlFor="range" className="mb-1 block h-4"><Mixed>打印范围(W):</Mixed></label>
              <Dropdown
                id="range"
                value="布局"
                className="w-[101px]"
                look="border-[#3c7fb1] bg-linear-to-b from-[#e8f5fc] from-50% to-[#aedbf4] to-50%"
              />
            </Group>
            <Group title="打印偏移(原点设置在可打印区域)" className="pt-1.5 pb-[9px] pl-[11px]">
              <div className="flex flex-col gap-[9px]">
                <div className="flex items-center">
                  <label htmlFor="off-x" className="w-[21px] pl-0.5"><Mixed>X:</Mixed></label>
                  <input id="off-x" defaultValue="0.00" className={`${field} mr-1.5 w-[71px]`} />
                  <span className="mr-[18px]">毫米</span>
                  <Tick id="center" label="居中打印(C)" disabled />
                </div>
                <div className="flex items-center">
                  <label htmlFor="off-y" className="w-[21px] pl-0.5"><Mixed>Y:</Mixed></label>
                  <input id="off-y" defaultValue="0.00" className={`${field} mr-1.5 w-[71px]`} />
                  <span>毫米</span>
                </div>
              </div>
            </Group>
          </div>
          <Group title="打印比例" className="w-[226px] pt-[7px] pr-[11px] pl-[11px]">
            <div className="-ml-1 flex flex-col gap-2">
              <Tick id="fit" label="布满图纸(I)" disabled />
              <div className="flex items-center">
                <label htmlFor="scale" className="w-[57px] shrink-0"><Mixed>比例(S):</Mixed></label>
                <Dropdown id="scale" value="1:1" mono className="flex-1" />
              </div>
              <div className="flex items-center pl-14">
                <input aria-label="图纸单位" defaultValue="1" className={`${field} w-[60px]`} />
                <Dropdown id="unit" value="毫米" className="mx-[3px] w-[71px]" />
                <span className="-mt-2"><Mixed>=</Mixed></span>
              </div>
              <div className="flex items-center gap-[3px] pl-14">
                <input id="drawing-unit" defaultValue="1" className={`${field} w-[60px]`} />
                <label htmlFor="drawing-unit"><Mixed>单位(U)</Mixed></label>
              </div>
              <div className="pl-14">
                <Tick id="lineweight" label="缩放线宽(L)" />
              </div>
            </div>
          </Group>
        </div>

        <div className="mt-3 flex items-center gap-1.5">
          <PushButton className="mr-auto w-[79px]">预览(P)...</PushButton>
          <PushButton className="w-[108px]">应用到布局(T)</PushButton>
          <PushButton className="w-[75px]" primary>确定</PushButton>
          <PushButton className="w-[75px]">取消</PushButton>
          <PushButton className="w-[75px]">帮助(H)</PushButton>
          <button aria-label="更多选项" className="-my-1">
            <svg width="21" height="21" viewBox="0 0 21 21">
              <circle cx="10.500" cy="10.500" r="9" fill="#e6ebf3" stroke="#23416f" strokeWidth="2" />
              <path d="M8 6l4.500 4.500L8 15" fill="none" stroke="#000" strokeWidth="3" />
            </svg>
          </button>
        </div>
      </form>
    </section>
  );
}

function Pointer() {
  return (
    <div className="pointer-events-none absolute top-[502px] left-[523px]">
      <div className="size-20 rounded-full bg-[rgb(255_84_8/0.5)]" />
      <svg width="14" height="20" viewBox="0 0 14 20" className="absolute top-10 left-10">
        <path d="M.5.500v16l4-3.500 2.500 6 3-1.500-2.500-5.500h5z" fill="#fff" stroke="#333" />
      </svg>
    </div>
  );
}

function Balloon() {
  return (
    <aside className="absolute right-[43px] bottom-[76px] w-[215px] rounded-2xl border border-black bg-[#ffffe1] pt-2 pr-2 pb-2 pl-2.5 text-xs leading-[18px] text-black">
      <div className="flex items-center gap-2">
        <svg width="16" height="16">
          <circle cx="8" cy="8" r="7.500" fill="#2450bd" stroke="#98a7cc" />
          <path d="M8 3v2M6.500 7H8v5M6 12.500h4" stroke="#fff" strokeWidth="2" fill="none" />
        </svg>
        <h2 className="font-bold">完成打印和作业发布</h2>
        <button aria-label="关闭通知" className="ml-auto flex size-4 items-center justify-center border border-[#8f8f8f] bg-[#f0f0f0]">
          <svg width="9" height="8"><path d="M1 0l7 8M8 0L1 8" stroke="#000" strokeWidth="2" /></svg>
        </button>
      </div>
      <p className="pt-0.5 pl-1">未找到错误或警告</p>
      <a href="#plot-details" className="ml-1 whitespace-nowrap text-[#0000e0] underline"><Mixed>单击以查看打印和发布详细信息...</Mixed></a>
      <svg width="20" height="16" className="absolute top-full right-[47px] -mt-px overflow-visible">
        <path d="M0 0l19 16V0" fill="#ffffe1" />
        <path d="M0 1l18.500 16V1" fill="none" stroke="#000" />
      </svg>
    </aside>
  );
}

function TaskButton({ label, active, children }: { label: string; active?: boolean; children: ReactNode }) {
  return (
    <button
      aria-label={label}
      className={`flex h-[39px] w-[59px] items-center justify-center rounded-[3px] border border-[#1c4f7c] ${
        active
          ? "bg-linear-to-br from-[#e8f6fb] to-[#7dbce0] shadow-[inset_0_0_0_1px_#e8f7ff]"
          : "bg-linear-to-br from-[#9ccbe6] to-[#4795cb] shadow-[inset_0_0_0_1px_#a5d2ec]"
      }`}
    >
      {children}
    </button>
  );
}

function TaskBar() {
  return (
    <div className="flex h-10 shrink-0 items-center border-t border-[#6bb0dc] bg-linear-to-r from-[#2674ae] via-[#3590cc] via-30% to-[#123f74]">
      <button aria-label="开始" className="ml-2">
        <svg width="38" height="38" viewBox="0 0 38 38">
          <defs>
            <radialGradient id="orb" cx=".5" cy=".9" r=".9">
              <stop offset="0" stopColor="#3fc4ee" />
              <stop offset=".5" stopColor="#1d5a8c" />
              <stop offset="1" stopColor="#8fa8bd" />
            </radialGradient>
          </defs>
          <circle cx="19" cy="19" r="17.500" fill="url(#orb)" stroke="#173a5c" />
          <path d="M11 12c3-2 5-1 7 0l-1.500 7c-2-1-5-1.500-7.500 0z" fill="#e8602c" />
          <path d="M19.500 12.500c3 1.500 5 1 8-.500l-2 7c-2.500 1.500-5 1.500-7.500.500z" fill="#8cc63c" />
          <path d="M8.500 20.500c3-2 5-1 7.500 0l-1.500 7c-2.500-1-5-1.500-8 0z" fill="#3b9fe0" />
          <path d="M17.500 21c3 1.500 5 1 8-.500l-2 7c-3 1.500-5 1.500-8 .500z" fill="#ffd02e" />
        </svg>
      </button>
      <button aria-label="桌面整理" className="ml-7">
        <svg width="31" height="31" viewBox="0 0 31 31">
          <rect width="31" height="31" fill="#2f86f6" />
          <path d="M4 4h4v4H4zM4 13h4v4H4zM4 22h4v4H4zM12 18h14v8H12zM12 4h7l7 9H12z" fill="#fff" />
          <path d="M14 0h17v14z" fill="#f5a31d" /><path d="M20 3l6 5" stroke="#fff" strokeWidth="3" />
        </svg>
      </button>
      <div className="ml-4 flex gap-[3px]">
        <TaskButton label="搜狗浏览器">
          <svg width="32" height="32" viewBox="0 0 32 32">
            <circle cx="16" cy="16" r="14" fill="#3383dd" stroke="#fff" strokeWidth="2" />
            <path d="M22 8c-5-3-12-2-12 3 0 6 13 4 13 10 0 4-7 6-13 3" fill="none" stroke="#fff" strokeWidth="5.500" />
          </svg>
        </TaskButton>
        <TaskButton label="资源管理器">
          <svg width="34" height="32" viewBox="0 0 34 32">
            <path d="M2 4h11l2 3h16v20H2z" fill="#e8c760" stroke="#b0912f" />
            <path d="M5 2h5v3H5z" fill="#3aa34a" /><path d="M14 3h5v3h-5z" fill="#c44" /><path d="M22 5h6v3h-6z" fill="#4489c8" />
            <path d="M2 9h30v18H2z" fill="#f7e39a" stroke="#c9a947" />
            <path d="M6 30V19c0-2 2-2 3-2h16c2 0 3 1 3 2v11h-5v-7H11v7z" fill="#a4d8f0" stroke="#5fa6cf" />
          </svg>
        </TaskButton>
        <TaskButton label="飞鸽">
          <svg width="30" height="24" viewBox="0 0 30 24">
            <path d="M1 12l27-10-3 18-8-4-4 4-1-6z" fill="#2fa0e6" />
            <path d="M12 14L28 2 17 16z" fill="#1770b8" /><path d="M1 12l27-10-16 12z" fill="#6cc6f5" />
          </svg>
        </TaskButton>
        <TaskButton label="AutoCAD" active>
          <CadLogo size={32} />
        </TaskButton>
        <TaskButton label="记事本">
          <svg width="30" height="32" viewBox="0 0 30 32">
            <path d="M24 5l4 1v22l-4 1z" fill="#8b7a55" />
            <path d="M10 4l15 1-3 24-20-4z" fill="#a8dce4" stroke="#6d9cab" />
            <path d="M22 29l-6-2 9-14z" fill="#eef9fb" />
            <path d="M10 4l15 1" stroke="#666" strokeWidth="3" strokeDasharray="1 1" />
          </svg>
        </TaskButton>
      </div>
      <div className="-ml-0.5 h-[39px] w-[3px] border-r border-[#8cc3e4]" />
      <div className="h-[39px] w-[3px] border-r border-[#6cb0dc]" />

      <div className="ml-auto flex items-center gap-2">
        <Icon>
          <path d="M1 6h14v8H1z" fill="#d5d5d5" stroke="#777" /><path d="M2 8.500h12M2 10.500h12M4 12.500h8" stroke="#555" strokeDasharray="1 1" />
          <path d="M4 6c0-4 6 0 8-4" fill="none" stroke="#ccc" />
        </Icon>
        <svg width="15" height="15" viewBox="0 0 16 16" className="mb-1">
          <circle cx="8" cy="8" r="7" fill="#1717a8" stroke="#cfd4ee" strokeWidth="1.500" />
          <path d="M5.500 6.500c0-4 5-3.500 5-1 0 2-2.500 2-2.500 4M8 11v2" fill="none" stroke="#fff" strokeWidth="1.500" />
        </svg>
        <svg width="9" height="18" className="mb-1.5">
          <path d="M3.500 1.500h5v3h-5zM.500 3.500h5v3h-5z" fill="#1a4c84" stroke="#fff" /><path d="M2 14h5l-2.500 3z" fill="#fff" />
        </svg>
        <div className="ml-1 flex items-center gap-2">
          <Icon>
            <g fill="#f39c9c"><circle cx="8" cy="4" r="3" /><circle cx="12" cy="7" r="3" /><circle cx="10.500" cy="11.500" r="3" /><circle cx="5.500" cy="11.500" r="3" /><circle cx="4" cy="7" r="3" /></g>
            <circle cx="8" cy="8" r="2" fill="#fde6e6" />
          </Icon>
          <Icon>
            <ellipse cx="8" cy="9" rx="6" ry="6" fill="#111" /><circle cx="8" cy="4" r="4" fill="#111" />
            <ellipse cx="8" cy="11" rx="3.500" ry="4" fill="#fff" /><path d="M3 8c3 2 7 2 10 0v2c-3 2-7 2-10 0z" fill="#d22" />
            <path d="M5 5h6l-3 1.500zM3 15h4M9 15h4" fill="#f0a21c" stroke="#f0a21c" /><path d="M6.500 2v2M9.500 2v2" stroke="#fff" />
          </Icon>
          <Icon>
            <path d="M8 1l7 2c0 6-2 10-7 13C3 13 1 9 1 3z" fill="#fff" /><path d="M8 3l5 1c0 5-2 8-5 10-3-2-5-5-5-10z" fill="#2f7be0" />
            <path d="M4 6l4 4 4-4" fill="none" stroke="#fff" strokeWidth="2" />
          </Icon>
          <Icon>
            <path d="M1 6h3l5-5v14l-5-5H1z" fill="#d4472a" stroke="#fff" strokeWidth=".5" /><path d="M12 5c1 2 1 4 0 6" fill="none" stroke="#7a4a52" strokeWidth="1.500" />
          </Icon>
          <Icon>
            <path d="M1 6h2l4-4v12l-4-4H1z" fill="#fff" /><path d="M9 6c1 1 1 3 0 4M11 4c2 2 2 6 0 8M13 2c3 3 3 9 0 12" fill="none" stroke="#fff" />
          </Icon>
          <Icon>
            <path d="M1.500 1.500h11v9h-11z" fill="#234f8c" stroke="#8fb6de" /><path d="M4 4h11v10H3z" fill="#2c69b4" stroke="#8fb6de" />
            <path d="M9 6v6M6 9h6M7 7l4 4M11 7l-4 4" stroke="#a8cdf0" />
          </Icon>
          <Icon>
            <circle cx="8" cy="8" r="7" fill="#f4f5ee" stroke="#8e9b6a" /><path d="M3 7c0-5 10-5 10 0v3c0 3-10 3-10 0z" fill="#c9c0a8" stroke="#776f58" />
            <path d="M4.500 7h7v3h-7z" fill="#fff" /><circle cx="6" cy="8" r="1" fill="#222" /><circle cx="10" cy="8" r="1" fill="#222" />
            <path d="M5 13.500h6" stroke="#5c8a3a" strokeWidth="2" />
          </Icon>
          <Icon>
            <path d="M5.500 4.500h9v7h-9zM7 14h7M10.500 12v2M1 1v4h4V1M3 5v9h3" fill="none" stroke="#fff" strokeWidth="1.500" />
          </Icon>
          <Icon>
            <path d="M2 1v14" stroke="#fff" strokeWidth="1.500" /><path d="M3 2h5l1 1h5v7H9L8 9H3z" fill="#fff" />
            <circle cx="11" cy="11" r="4.500" fill="#d42a2a" /><path d="M9 9l4 4M13 9l-4 4" stroke="#fff" strokeWidth="1.500" />
          </Icon>
        </div>
        <div className="mr-2 ml-1.5 text-center text-xs leading-[18px] text-white">
          <p>9:15</p>
          <p>2020/1/10</p>
        </div>
        <button aria-label="显示桌面" className="h-[39px] w-3 border border-[#0c2547] bg-[#4c76a4] shadow-[inset_0_0_0_1px_#7b9cc0]" />
      </div>
    </div>
  );
}

export default function App() {
  return (
    <div className="relative flex h-screen min-h-[720px] flex-col overflow-hidden bg-linear-to-r from-[#2cb4fa] via-[#2a9cf2] via-50% to-[#1763b8] font-['Noto_Sans','Noto_Sans_CJK_SC',sans-serif] text-black">
      <TitleBar />
      <div className="mx-[3px] mb-1.5 flex min-h-0 flex-1 flex-col border border-[#22406a] bg-[#f0f0f0]">
        <MenuBar />
        <ToolBar />
        <DocumentWindow />
        <CommandPane />
        <StatusBar />
      </div>
      <TaskBar />
      <PlotDialog />
      <Pointer />
      <Balloon />
    </div>
  );
}
